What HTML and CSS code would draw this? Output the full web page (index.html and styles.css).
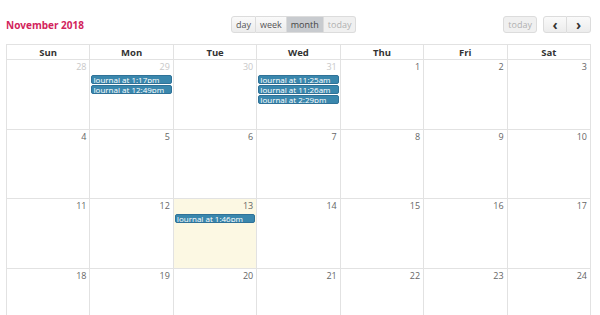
FILE: index.html
```html
<!DOCTYPE html>
<html lang="en">
<head>
    <meta charset="UTF-8">
    <meta name="viewport" content="width=device-width, initial-scale=1.0">
    <title>Journal Calendar</title>
    <link rel="stylesheet" href="styles.css">
</head>
<body>
    <div class="calendar">
        <div class="toolbar">
            <h2 class="title">November 2018</h2>
            <div class="btn-group">
                <button class="btn">day</button>
                <button class="btn">week</button>
                <button class="btn active">month</button>
                <button class="btn disabled">today</button>
            </div>
            <div class="right">
                <button class="btn single disabled">today</button>
                <div class="btn-group">
                    <button class="btn arrow">&#x2039;</button>
                    <button class="btn arrow">&#x203A;</button>
                </div>
            </div>
        </div>
        <table class="grid">
            <thead>
                <tr>
                    <th>Sun</th><th>Mon</th><th>Tue</th><th>Wed</th><th>Thu</th><th>Fri</th><th>Sat</th>
                </tr>
            </thead>
            <tbody>
                <tr>
                    <td><div class="num other">28</div></td>
                    <td><div class="num other">29</div>
                        <div class="event">Journal at 1:17pm</div>
                        <div class="event">Journal at 12:49pm</div></td>
                    <td><div class="num other">30</div></td>
                    <td><div class="num other">31</div>
                        <div class="event">Journal at 11:25am</div>
                        <div class="event">Journal at 11:26am</div>
                        <div class="event">Journal at 2:29pm</div></td>
                    <td><div class="num">1</div></td>
                    <td><div class="num">2</div></td>
                    <td><div class="num">3</div></td>
                </tr>
                <tr>
                    <td><div class="num">4</div></td>
                    <td><div class="num">5</div></td>
                    <td><div class="num">6</div></td>
                    <td><div class="num">7</div></td>
                    <td><div class="num">8</div></td>
                    <td><div class="num">9</div></td>
                    <td><div class="num">10</div></td>
                </tr>
                <tr>
                    <td><div class="num">11</div></td>
                    <td><div class="num">12</div></td>
                    <td class="today"><div class="num">13</div>
                        <div class="event">Journal at 1:46pm</div></td>
                    <td><div class="num">14</div></td>
                    <td><div class="num">15</div></td>
                    <td><div class="num">16</div></td>
                    <td><div class="num">17</div></td>
                </tr>
                <tr>
                    <td><div class="num">18</div></td>
                    <td><div class="num">19</div></td>
                    <td><div class="num">20</div></td>
                    <td><div class="num">21</div></td>
                    <td><div class="num">22</div></td>
                    <td><div class="num">23</div></td>
                    <td><div class="num">24</div></td>
                </tr>
            </tbody>
        </table>
    </div>
</body>
</html>
```

FILE: styles.css
```css
body {
    margin: 0;
    font-family: "Open Sans", "Noto Sans", sans-serif;
    color: #333;
    background: #fff;
    overflow: hidden;
}
.calendar {
    padding: 16px 9px 0 6px;
}
.toolbar {
    display: flex;
    justify-content: space-between;
    align-items: center;
    height: 17px;
    margin-bottom: 11px;
}
.title {
    margin: 0;
    font-size: 10px;
    font-weight: 700;
    color: #d2245c;
}
.right {
    display: flex;
    gap: 6px;
}
.btn-group {
    display: flex;
}
.btn {
    font-family: inherit;
    font-size: 9px;
    color: #555;
    height: 17px;
    padding: 0 4px;
    margin: 0;
    border: 1px solid #dcdcdc;
    border-left-width: 0;
    background: linear-gradient(#fafafa, #ececec);
}
.btn-group .btn:first-child {
    border-left-width: 1px;
    border-radius: 3px 0 0 3px;
}
.btn-group .btn:last-child {
    border-radius: 0 3px 3px 0;
}
.btn.single {
    border-left-width: 1px;
    border-radius: 3px;
}
.btn.active {
    background: #c8cbcf;
    color: #444;
}
.btn.disabled {
    color: #b0b0b0;
    background: #f0f0f0;
}
.btn.arrow {
    width: 24px;
    font-size: 14px;
    font-weight: 700;
    line-height: 14px;
    color: #333;
}
.grid {
    width: 585px;
    border-collapse: collapse;
    table-layout: fixed;
}
.grid th {
    height: 14px;
    padding: 0;
    font-size: 9.5px;
    font-weight: 700;
    color: #333;
    border: 1px solid #e2e2e2;
}
.grid td {
    height: 68.5px;
    padding: 0 1px;
    vertical-align: top;
    border: 1px solid #e2e2e2;
}
.grid td.today {
    background: #fcf8e3;
}
.num {
    text-align: right;
    font-size: 9px;
    color: #666;
    padding: 1px 2px 2px 0;
    line-height: 12px;
}
.num.other {
    color: #c8c8c8;
}
.event {
    background: #3a87ad;
    border: 1px solid #2f7298;
    border-radius: 2px;
    color: #fff;
    font-size: 8px;
    line-height: 7px;
    height: 7px;
    padding: 0 1px;
    margin-bottom: 1px;
    white-space: nowrap;
    overflow: hidden;
}
```
